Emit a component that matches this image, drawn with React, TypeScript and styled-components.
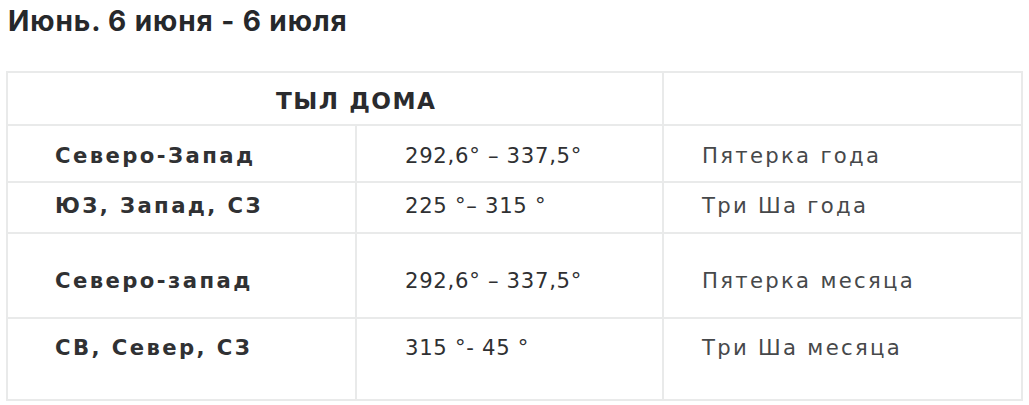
import React from "react";
import styled, { createGlobalStyle } from "styled-components";

const Global = createGlobalStyle`
  html, body { margin: 0; padding: 0; background: #ffffff; }
  body { font-family: Inter, "Noto Sans", sans-serif; -webkit-font-smoothing: antialiased; }
`;

const Page = styled.div`
  padding: 4px 6px 0 6px;
  width: 1017px;
`;

const Title = styled.h1`
  margin: 0 0 0 2px;
  font-family: Inter, "Noto Sans", sans-serif;
  font-size: 28px;
  line-height: 34px;
  font-weight: 700;
  color: #26282b;
  letter-spacing: 0.9px;
`;

const Table = styled.div`
  margin-top: 33px;
  border: 2px solid #e9eaea;
  box-sizing: border-box;
  width: 1017px;
  font-family: "DejaVu Sans", Verdana, sans-serif;
`;

const Row = styled.div<{ $h: number; $last?: boolean }>`
  display: grid;
  grid-template-columns: 349px 307px 1fr;
  height: ${(p) => p.$h}px;
  box-sizing: border-box;
  border-bottom: ${(p) => (p.$last ? "none" : "2px solid #e9eaea")};
`;

const Cell = styled.div<{ $pt: number; $pl: number; $last?: boolean; $span?: number }>`
  box-sizing: border-box;
  padding-top: ${(p) => p.$pt}px;
  padding-left: ${(p) => p.$pl}px;
  border-right: ${(p) => (p.$last ? "none" : "2px solid #e9eaea")};
  grid-column: ${(p) => (p.$span ? `span ${p.$span}` : "auto")};
  font-size: 21.2px;
  line-height: 24px;
  white-space: nowrap;
`;

const HeadCell = styled(Cell)`
  font-size: 23.2px;
  line-height: 28px;
  font-weight: 700;
  color: #2a2b2e;
  letter-spacing: 1.5px;
`;

const Dir = styled(Cell)`
  font-weight: 700;
  color: #303133;
  letter-spacing: 2.4px;
`;

const Deg = styled(Cell)`
  font-weight: 400;
  color: #2f3032;
  letter-spacing: 0.7px;
`;

const Star = styled(Cell)`
  font-weight: 400;
  color: #46484a;
  letter-spacing: 2.3px;
`;

const rows = [
  { h: 57, pt: 18, dir: "Северо-Запад", deg: "292,6° – 337,5°", star: "Пятерка года" },
  { h: 51, pt: 11, dir: "ЮЗ, Запад, СЗ", deg: "225 °– 315 °", star: "Три Ша года" },
  { h: 85, pt: 35, dir: "Северо-запад", deg: "292,6° – 337,5°", star: "Пятерка месяца" },
  { h: 80, pt: 17, dir: "СВ, Север, СЗ", deg: "315 °- 45 °", star: "Три Ша месяца" },
];

export default function App() {
  return (
    <>
      <Global />
      <Page>
        <Title>Июнь. 6 июня - 6 июля</Title>
        <Table>
          <Row $h={53}>
            <HeadCell $pt={14} $pl={268} $span={2}>ТЫЛ ДОМА</HeadCell>
            <HeadCell $pt={14} $pl={0} $last />
          </Row>
          {rows.map((r, i) => (
            <Row key={i} $h={r.h} $last={i === rows.length - 1}>
              <Dir $pt={r.pt} $pl={47}>{r.dir}</Dir>
              <Deg $pt={r.pt} $pl={48}>{r.deg}</Deg>
              <Star $pt={r.pt} $pl={38} $last>{r.star}</Star>
            </Row>
          ))}
        </Table>
      </Page>
    </>
  );
}
